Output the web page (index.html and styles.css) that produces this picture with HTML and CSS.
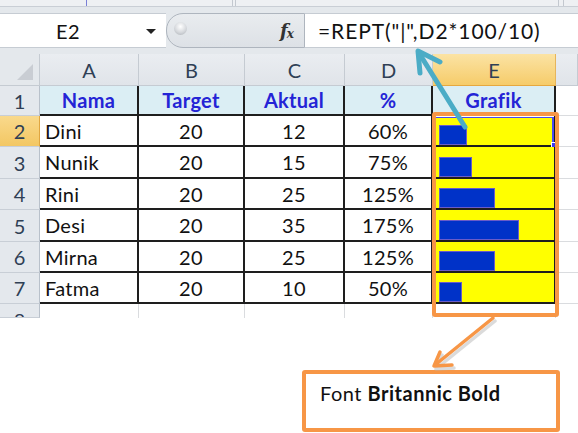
FILE: index.html
```html
<!DOCTYPE html>
<html>
<head>
<meta charset="utf-8">
<link rel="stylesheet" href="styles.css">
</head>
<body>
<div class="page">
  <div class="topstrip">
    <span class="tick t1"></span><span class="tick t2"></span><span class="tick t3"></span><span class="tick t4"></span><span class="tick t5"></span>
  </div>
  <div class="fbar">
    <div class="namebox"><span class="ref">E2</span><span class="dd"></span></div>
    <div class="fxzone"><span class="knob"></span><span class="fx">f<span class="fxx">x</span></span></div>
    <div class="formula">=REPT("|",D2*100/10)</div>
  </div>
  <div class="grid">
    <div class="corner"><span class="tri"></span></div>
    <div class="ch">A</div><div class="ch">B</div><div class="ch">C</div><div class="ch">D</div><div class="ch sel">E</div><div class="ch"></div>

    <div class="rh">1</div>
    <div class="c hd">Nama</div><div class="c hd">Target</div><div class="c hd">Aktual</div><div class="c hd">%</div><div class="c hd">Grafik</div><div class="f"></div>

    <div class="rh sel">2</div>
    <div class="c l">Dini</div><div class="c">20</div><div class="c">12</div><div class="c">60%</div><div class="c g cur"><span class="bar" style="width:28px"></span><span class="handle"></span></div><div class="f"></div>

    <div class="rh">3</div>
    <div class="c l">Nunik</div><div class="c">20</div><div class="c">15</div><div class="c">75%</div><div class="c g"><span class="bar" style="width:33px"></span></div><div class="f"></div>

    <div class="rh">4</div>
    <div class="c l">Rini</div><div class="c">20</div><div class="c">25</div><div class="c">125%</div><div class="c g"><span class="bar" style="width:56px"></span></div><div class="f"></div>

    <div class="rh">5</div>
    <div class="c l">Desi</div><div class="c">20</div><div class="c">35</div><div class="c">175%</div><div class="c g"><span class="bar" style="width:80px"></span></div><div class="f"></div>

    <div class="rh">6</div>
    <div class="c l">Mirna</div><div class="c">20</div><div class="c">25</div><div class="c">125%</div><div class="c g"><span class="bar" style="width:56px"></span></div><div class="f"></div>

    <div class="rh">7</div>
    <div class="c l">Fatma</div><div class="c">20</div><div class="c">10</div><div class="c">50%</div><div class="c g"><span class="bar" style="width:23px"></span></div><div class="f"></div>

    <div class="rh r8"><span>8</span></div>
    <div class="e"></div><div class="e"></div><div class="e"></div><div class="e"></div><div class="e"></div><div class="e last"></div>
  </div>
  <div class="callout">Font <b>Britannic Bold</b></div>

  <div class="obox"></div>
  <svg class="arrows" width="578" height="433" viewBox="0 0 578 433">
    <g stroke="#4bacc6" stroke-width="5" stroke-linecap="round" stroke-linejoin="round" fill="none">
      <line x1="465" y1="127" x2="419" y2="53"/>
      <polyline points="440,62 418,51 420,73"/>
    </g>
    <g stroke="#b9b9b9" stroke-width="3.5" stroke-linecap="round" stroke-linejoin="round" fill="none" opacity="0.5" transform="translate(2,3)">
      <line x1="493" y1="318" x2="435" y2="365"/>
      <polyline points="440,352 434,366 452,365"/>
    </g>
    <g stroke="#f79646" stroke-width="3.5" stroke-linecap="round" stroke-linejoin="round" fill="none">
      <line x1="493" y1="318" x2="435" y2="365"/>
      <polyline points="440,352 434,366 452,365"/>
    </g>
  </svg>
</div>
</body>
</html>
```
FILE: styles.css
```css
html, body {
  margin: 0;
  padding: 0;
  background: #ffffff;
}
.page {
  position: relative;
  width: 578px;
  height: 433px;
  overflow: hidden;
  font-family: Lato, "Liberation Sans", sans-serif;
  background: #ffffff;
}
.topstrip {
  position: relative;
  height: 6px;
  background: #eef0f3;
  border-bottom: 1px solid #c9ced5;
}
.tick {
  position: absolute;
  top: 0;
  width: 1px;
  height: 6px;
  background: #c3c8cf;
}
.t1 { left: 86px; background: #7a7fd6; }
.t2 { left: 232px; }
.t3 { left: 235px; }
.t4 { left: 558px; }
.t5 { left: 563px; }

.fbar {
  display: flex;
  box-sizing: border-box;
  border-top: 6px solid #e4e8ec;
  border-bottom: 6px solid #e4e8ec;
  height: 47px;
  background: #e4e8ec;
}
.namebox {
  width: 166px;
  background: #fff;
  border-top: 1px solid #c6ccd3;
  border-bottom: 1px solid #c6ccd3;
  display: flex;
  align-items: center;
  position: relative;
  box-sizing: border-box;
}
.ref {
  font-size: 20px;
  color: #111;
  margin-left: 56px;
  letter-spacing: 0.5px;
}
.dd {
  position: absolute;
  left: 146px;
  top: 15px;
  width: 0;
  height: 0;
  border-left: 5px solid transparent;
  border-right: 5px solid transparent;
  border-top: 5px solid #222;
}
.fxzone {
  width: 139px;
  box-sizing: border-box;
  background: linear-gradient(#e9ecef, #dde1e6);
  border: 1px solid #aeb5be;
  border-radius: 17px 0 0 17px;
  position: relative;
  display: flex;
  align-items: center;
  justify-content: flex-end;
  padding-right: 11px;
}
.knob {
  position: absolute;
  left: 7px;
  top: 8px;
  width: 13px;
  height: 13px;
  border-radius: 50%;
  background: radial-gradient(circle at 50% 35%, #ffffff 0%, #d5d8dc 55%, #a9adb3 100%);
}
.fx {
  font-family: "DejaVu Serif", "Liberation Serif", serif;
  font-style: italic;
  font-weight: bold;
  font-size: 18px;
  color: #333;
  letter-spacing: -1px;
}
.fxx {
  font-size: 12px;
  vertical-align: -1px;
}
.formula {
  flex: 1;
  background: #fff;
  border-top: 1px solid #c6ccd3;
  border-bottom: 1px solid #c6ccd3;
  font-size: 21px;
  letter-spacing: 0.9px;
  color: #111;
  padding-left: 13px;
  display: flex;
  align-items: center;
  box-sizing: border-box;
}

.grid {
  display: grid;
  grid-template-columns: 40px 99px 106px 100px 88px 123px 22px;
  grid-template-rows: 32px 30px 31px 32px 31px 32px 31px 31px 14px;
  font-size: 20px;
}
.grid > div {
  box-sizing: border-box;
  display: flex;
  align-items: center;
  justify-content: center;
  overflow: hidden;
}
.corner {
  background: #e4e8ec;
  border-right: 1px solid #c5cbd2;
  border-bottom: 1px solid #c5cbd2;
  position: relative;
}
.tri {
  position: absolute;
  right: 6px;
  bottom: 5px;
  width: 0;
  height: 0;
  border-left: 16px solid transparent;
  border-bottom: 16px solid #c9cdd3;
}
.ch {
  background: linear-gradient(#eaedf1, #e0e4e9);
  border-right: 1px solid #c5cbd2;
  border-bottom: 1px solid #c5cbd2;
  color: #2f3f55;
}
.ch.sel {
  background: linear-gradient(#fbe3a4, #f6cc6a);
  border-bottom: 1px solid #e6a83f;
  border-right: 1px solid #e6b55c;
}
.rh {
  background: #e4e8ed;
  border-right: 1px solid #b9c1cb;
  border-bottom: 1px solid #c8ced6;
  color: #2f3f55;
}
.rh.sel {
  background: linear-gradient(#f9d98c, #f3c763);
  border-right: 1px solid #e0a640;
}
.r8 {
  align-items: flex-start !important;
}
.r8 span {
  margin-top: 4px;
}
.c {
  border-right: 2px solid #1e1e1e;
  border-bottom: 2px solid #1e1e1e;
  color: #111;
  background: #fff;
  letter-spacing: 0.3px;
}
.c.l {
  justify-content: flex-start !important;
  padding-left: 5px;
}
.c.hd {
  background: #dbeef4;
  color: #2424d6;
  font-weight: bold;
}
.c.g {
  background: #ffff00;
  justify-content: flex-start !important;
  align-items: flex-end !important;
  padding-left: 6px;
  position: relative;
}
.bar {
  display: block;
  height: 20px;
  box-sizing: border-box;
  background: #0032c8;
  border: 1px solid #6a5cc8;
}
.c.cur {
  box-shadow: inset 0 1px 0 0 #ffffff, inset 0 2px 0 0 #4a4af0, inset -2px 0 0 0 #4a4af0;
  overflow: visible !important;
}
.handle {
  position: absolute;
  right: -4px;
  bottom: -4px;
  width: 5px;
  height: 5px;
  background: #3a3af0;
  border: 1px solid #fff;
}
.f {
  background: #fff;
  border-bottom: 1px solid #dadcdf;
}
.e {
  background: #fff;
  border-right: 1px solid #dadcdf;
}
.e.last {
  border-right: none;
}

.callout {
  margin: 52px 0 0 302px;
  width: 258px;
  height: 62px;
  box-sizing: border-box;
  border: 4px solid #f79646;
  border-radius: 3px;
  padding: 7px 0 0 14px;
  font-size: 20px;
  letter-spacing: 0.5px;
  color: #111;
}
.callout b {
  font-weight: bold;
}

.obox {
  position: absolute;
  left: 432px;
  top: 112px;
  width: 127px;
  height: 205px;
  box-sizing: border-box;
  border: 4px solid #f79646;
  border-radius: 3px;
}
.arrows {
  position: absolute;
  left: 0;
  top: 0;
  pointer-events: none;
}
```
